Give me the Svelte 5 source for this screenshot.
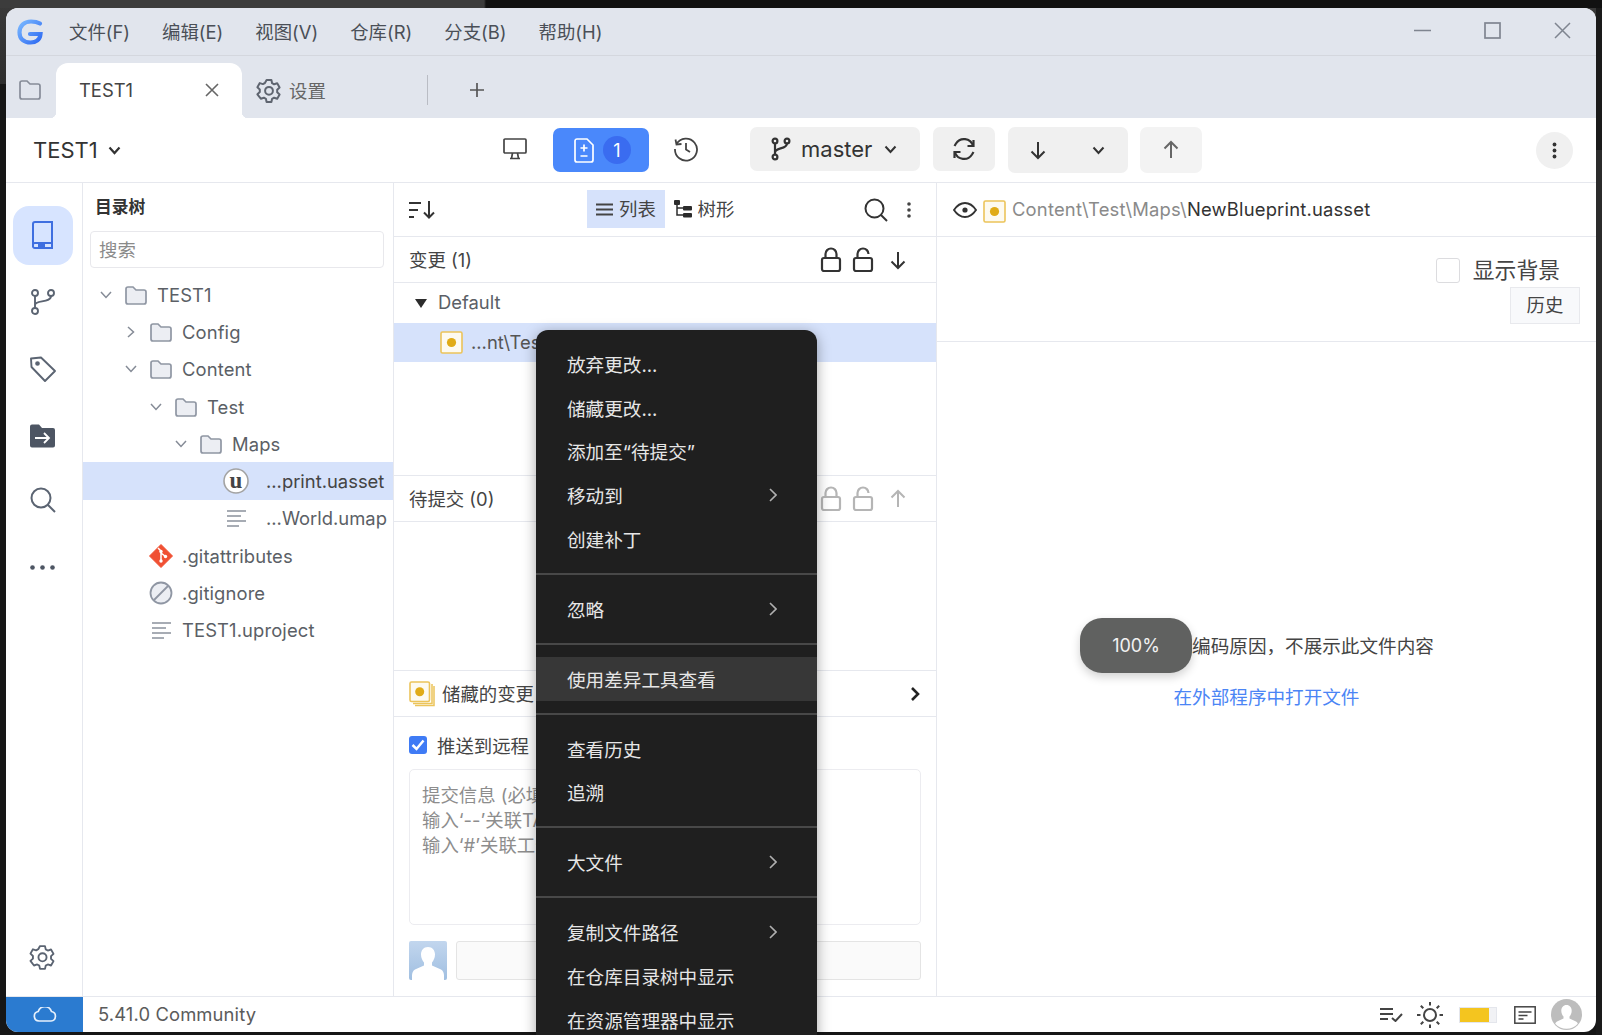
<script>
  const menu1 = ['文件(F)', '编辑(E)', '视图(V)', '仓库(R)', '分支(B)', '帮助(H)'];
  const tree = [
    { d: 0, c: 'down', i: 'folder', t: 'TEST1' },
    { d: 1, c: 'right', i: 'folder', t: 'Config' },
    { d: 1, c: 'down', i: 'folder', t: 'Content' },
    { d: 2, c: 'down', i: 'folder', t: 'Test' },
    { d: 3, c: 'down', i: 'folder', t: 'Maps' },
    { d: 4, i: 'ue', t: '...print.uasset', sel: true, far: true },
    { d: 4, i: 'lines', t: '...World.umap', far: true },
    { d: 1, i: 'git', t: '.gitattributes' },
    { d: 1, i: 'ban', t: '.gitignore' },
    { d: 1, i: 'lines', t: 'TEST1.uproject' }
  ];
  const ctx = [
    [{ t: '放弃更改...' }, { t: '储藏更改...' }, { t: '添加至“待提交”' }, { t: '移动到', sub: true }, { t: '创建补丁' }],
    [{ t: '忽略', sub: true }],
    [{ t: '使用差异工具查看', hot: true }],
    [{ t: '查看历史' }, { t: '追溯' }],
    [{ t: '大文件', sub: true }],
    [{ t: '复制文件路径', sub: true }, { t: '在仓库目录树中显示' }, { t: '在资源管理器中显示' }]
  ];
</script>

{#snippet folderIcon()}
  <svg width="24" height="22" viewBox="0 0 24 22"><path d="M2 5a2 2 0 0 1 2-2h5l3 3h8a2 2 0 0 1 2 2v10a2 2 0 0 1-2 2H4a2 2 0 0 1-2-2z" fill="#eceef3" stroke="#8f96a3" stroke-width="1.7"/></svg>
{/snippet}
{#snippet linesIcon()}
  <svg width="24" height="22" viewBox="0 0 24 22" fill="none" stroke="#8b919c" stroke-width="1.6"><path d="M3 4h19M3 9h14M3 14h19M3 19h12"/></svg>
{/snippet}
{#snippet modIcon()}
  <svg width="23" height="23" viewBox="0 0 23 23"><rect x="1" y="1" width="21" height="21" rx="1.5" fill="#fdfaf0" stroke="#ecc45a" stroke-width="1.6"/><circle cx="11.5" cy="11.5" r="4.6" fill="#e0ab17"/></svg>
{/snippet}
{#snippet lockIcon(color)}
  <svg width="22" height="26" viewBox="0 0 22 26" fill="none" stroke={color} stroke-width="2.2"><rect x="2" y="11" width="18" height="13" rx="2"/><path d="M5.5 11V7a5.5 5.5 0 0 1 11 0v4"/></svg>
{/snippet}
{#snippet unlockIcon(color)}
  <svg width="22" height="26" viewBox="0 0 22 26" fill="none" stroke={color} stroke-width="2.2"><rect x="2" y="11" width="18" height="13" rx="2"/><path d="M5.5 11V7a5.5 5.5 0 0 1 11 0"/></svg>
{/snippet}
{#snippet arrow(color, up)}
  <svg width="18" height="20" viewBox="0 0 18 20" fill="none" stroke={color} stroke-width="2"><g transform={up ? 'rotate(180 9 10)' : ''}><path d="M9 2v16M2.5 11.5 9 18l6.5-6.5"/></g></svg>
{/snippet}
{#snippet chevD(color, w = 2)}
  <svg width="13" height="9" viewBox="0 0 13 9" fill="none" stroke={color} stroke-width={w}><path d="M1.5 1.5 6.5 7l5-5.5"/></svg>
{/snippet}
{#snippet gearIcon(size, color, w = 1.8)}
  <svg width={size} height={size} viewBox="0 0 26 26" fill="none" stroke={color} stroke-width={w}><path d="M10.6 2h4.8l.7 3.2 2 1.1 3.1-1 2.4 4.2-2.4 2.2v2.6l2.4 2.2-2.4 4.2-3.1-1-2 1.1-.7 3.2h-4.8l-.7-3.2-2-1.1-3.1 1L1.4 16.3l2.4-2.2v-2.6L1.4 9.3l2.4-4.2 3.1 1 2-1.1z" stroke-linejoin="round"/><circle cx="13" cy="12.8" r="3.9"/></svg>
{/snippet}

<div class="stage">
  <div class="win">
    <header class="titlebar">
      <svg class="logo" width="26" height="26" viewBox="0 0 26 26" fill="none"><defs><linearGradient id="lg" x1="0" y1="0" x2="1" y2="1"><stop offset="0" stop-color="#7ab8ff"/><stop offset="1" stop-color="#2f6bf2"/></linearGradient></defs><path d="M23 4.500C20 2.800 17 2.500 14 2.500 7 2.500 2.500 7 2.500 13.500S7 23.500 13.500 23.500c5.500 0 9.500-3 10-8.500H13" stroke="url(#lg)" stroke-width="4.200" stroke-linecap="round"/></svg>
      <nav class="menubar">
        {#each menu1 as m}<span>{m}</span>{/each}
      </nav>
      <div class="winctl">
        <svg width="17" height="17" viewBox="0 0 17 17" stroke="#7f8590" stroke-width="1.700"><path d="M0 8.500h17"/></svg>
        <svg width="17" height="17" viewBox="0 0 17 17" fill="none" stroke="#7f8590" stroke-width="1.700"><rect x="1" y="1" width="15" height="15"/></svg>
        <svg width="17" height="17" viewBox="0 0 17 17" stroke="#7f8590" stroke-width="1.500"><path d="M1 1l15 15M16 1 1 16"/></svg>
      </div>
    </header>

    <div class="tabbar">
      <span class="tabfolder"><svg width="24" height="22" viewBox="0 0 24 22" fill="none" stroke="#868c98" stroke-width="1.700"><path d="M2 4a2 2 0 0 1 2-2h5l3 3h8a2 2 0 0 1 2 2v11a2 2 0 0 1-2 2H4a2 2 0 0 1-2-2z"/></svg></span>
      <div class="tab active">
        <span class="tabtext">TEST1</span>
        <svg class="tabx" width="14" height="14" viewBox="0 0 14 14" stroke="#666" stroke-width="1.600"><path d="M1 1l12 12M13 1 1 13"/></svg>
      </div>
      <div class="tab plain">
        {@render gearIcon(26, '#5f6570', 2)}
        <span class="tabtext">设置</span>
      </div>
      <span class="tabsep"></span>
      <svg class="plus" width="14" height="14" viewBox="0 0 14 14" stroke="#555" stroke-width="1.700"><path d="M7 0v14M0 7h14"/></svg>
    </div>

    <div class="toolbar">
      <div class="repo">TEST1 {@render chevD('#333', 2.200)}</div>
      <svg class="monitor" width="24" height="22" viewBox="0 0 24 22" fill="none" stroke="#444" stroke-width="1.700"><rect x="1" y="1" width="22" height="14" rx="1"/><path d="M9.500 15l-1 5.500h7l-1-5.500M7 20.500h10"/></svg>
      <button class="changes-btn">
        <svg width="22" height="25" viewBox="0 0 22 25" fill="none" stroke="#fff" stroke-width="1.700"><path d="M2 3a2 2 0 0 1 2-2h10l6 6v15a2 2 0 0 1-2 2H4a2 2 0 0 1-2-2z"/><path d="M11 6.500v7M7.500 10h7M7.500 18h7"/></svg>
        <span class="badge">1</span>
      </button>
      <svg class="hist" width="26" height="26" viewBox="0 0 26 26" fill="none" stroke="#444" stroke-width="1.800"><path d="M3.500 8A11 11 0 1 1 2 13"/><path d="M2.500 3.500 3.500 8.500 8.500 8"/><path d="M13 7v6.500l4 2.500"/></svg>
      <button class="tbtn master">
        <svg width="20" height="24" viewBox="0 0 20 24" fill="none" stroke="#333" stroke-width="2.200"><circle cx="4" cy="4" r="2.400"/><circle cx="16" cy="4" r="2.400"/><circle cx="4" cy="20" r="2.400"/><path d="M4 6.400v11.200M16 6.400c0 6-12 4-12 9"/></svg>
        <span>master</span>
        {@render chevD('#333')}
      </button>
      <button class="tbtn sync">
        <svg width="24" height="24" viewBox="0 0 24 24" fill="none" stroke="#333" stroke-width="2.200"><path d="M21 8.500A9.500 9.500 0 0 0 4 6.500L2.500 9M3 15.500A9.500 9.500 0 0 0 20 17.500l1.500-2.500"/><path d="M21.500 3v6h-6M2.500 21v-6h6"/></svg>
      </button>
      <button class="tbtn pull">
        {@render arrow('#333', false)}
        {@render chevD('#333')}
      </button>
      <button class="tbtn push">{@render arrow('#666', true)}</button>
      <button class="more"><svg width="5" height="17" viewBox="0 0 5 17" fill="#333"><circle cx="2.500" cy="2.500" r="1.900"/><circle cx="2.500" cy="8.500" r="1.900"/><circle cx="2.500" cy="14.500" r="1.900"/></svg></button>
    </div>

    <div class="main">
      <aside class="side">
        <div class="side-active">
          <svg width="23" height="29" viewBox="0 0 23 29" fill="none" stroke="#3f6fe0" stroke-width="2"><path d="M2 24V3a2 2 0 0 1 2-2h17v26H4a2 2 0 0 1-2-2.500 2 2 0 0 1 2-2.500h17"/><path d="M7 22h7v6l-3.500-2L7 28z" fill="#3f6fe0" stroke="none"/></svg>
        </div>
        <div class="side-item first"><svg width="26" height="28" viewBox="0 0 26 28" fill="none" stroke="#5b6472" stroke-width="1.900"><circle cx="5" cy="5" r="3"/><circle cx="21" cy="5" r="3"/><circle cx="5" cy="23" r="3"/><path d="M5 8v12M21 8c0 7-16 4-16 9"/></svg></div>
        <div class="side-item"><svg width="28" height="28" viewBox="0 0 28 28" fill="none" stroke="#5b6472" stroke-width="1.900"><path d="M2 3.500 2.500 12 16 26l10-10L12 2.500z" stroke-linejoin="round"/><circle cx="8.500" cy="8.500" r="1.400" fill="#5b6472"/></svg></div>
        <div class="side-item"><svg width="25" height="24" viewBox="0 0 25 24"><path d="M0 2.500A2 2 0 0 1 2 .5h7l3 3.500h11a2 2 0 0 1 2 2v15.500a2 2 0 0 1-2 2H2a2 2 0 0 1-2-2z" fill="#4d5563"/><path d="M5 14h14M14 9l5 5-5 5" stroke="#fff" stroke-width="1.800" fill="none"/></svg></div>
        <div class="side-item s"><svg width="26" height="26" viewBox="0 0 26 26" fill="none" stroke="#5b6472" stroke-width="2"><circle cx="11" cy="11" r="9.500"/><path d="M18 18l7 7"/></svg></div>
        <div class="side-item d"><svg width="25" height="5" viewBox="0 0 25 5" fill="#4d5563"><circle cx="2.500" cy="2.500" r="2.300"/><circle cx="12.500" cy="2.500" r="2.300"/><circle cx="22.500" cy="2.500" r="2.300"/></svg></div>
        <div class="side-gear">{@render gearIcon(27, '#5b6472')}</div>
      </aside>

      <section class="treepane">
        <h2>目录树</h2>
        <input class="search" placeholder="搜索" />
        <div class="tree">
          {#each tree as r}
            <div class="row" class:sel={r.sel} style="padding-left:{13 + 25 * r.d}px">
              <span class="chev">
                {#if r.c === 'down'}
                  <svg width="12" height="8" viewBox="0 0 12 8" fill="none" stroke="#858b96" stroke-width="1.500"><path d="M1 1l5 5.500L11 1"/></svg>
                {:else if r.c === 'right'}
                  <svg width="8" height="12" viewBox="0 0 8 12" fill="none" stroke="#858b96" stroke-width="1.500"><path d="M1 1l5.500 5L1 11"/></svg>
                {/if}
              </span>
              <span class="ic">
                {#if r.i === 'folder'}
                  {@render folderIcon()}
                {:else if r.i === 'lines'}
                  {@render linesIcon()}
                {:else if r.i === 'ue'}
                  <svg width="26" height="26" viewBox="0 0 26 26"><circle cx="13" cy="13" r="12" fill="#fff" stroke="#a3a3a3" stroke-width="1.600"/><text x="13" y="19.500" text-anchor="middle" font-family="Liberation Serif" font-weight="700" font-size="23" fill="#444">u</text></svg>
                {:else if r.i === 'git'}
                  <svg width="24" height="24" viewBox="0 0 24 24"><path d="M12 .5 23.500 12 12 23.500.5 12z" fill="#f05033" stroke="#f05033" stroke-width="1" stroke-linejoin="round"/><path d="M9 4l3 3M12 7v10M12 9l4.500 3.500" stroke="#fff" stroke-width="1.500" fill="none"/><circle cx="12" cy="7.500" r="1.700" fill="#fff"/><circle cx="12" cy="17" r="1.700" fill="#fff"/><circle cx="16.500" cy="12.500" r="1.700" fill="#fff"/></svg>
                {:else if r.i === 'ban'}
                  <svg width="24" height="24" viewBox="0 0 24 24" fill="#eceef3" stroke="#8f96a3" stroke-width="1.800"><circle cx="12" cy="12" r="10.500"/><path d="M5 19 19 5" fill="none"/></svg>
                {/if}
              </span>
              <span class="lbl" class:far={r.far}>{r.t}</span>
            </div>
          {/each}
        </div>
      </section>

      <section class="center">
        <div class="c-head">
          <svg class="sort" width="26" height="18" viewBox="0 0 26 18" fill="none" stroke="#333" stroke-width="2"><path d="M0 2h12M0 9h9M0 16h5"/><path d="M20 0v16M15 11.500l5 5 5-5"/></svg>
          <div class="seg on">
            <svg width="17" height="13" viewBox="0 0 17 13" stroke="#444" stroke-width="1.800"><path d="M0 1.500h17M0 6.500h17M0 11.500h17"/></svg>
            <span>列表</span>
          </div>
          <div class="seg">
            <svg width="18" height="18" viewBox="0 0 18 18" fill="#2c2c2c"><rect x="0" y="0" width="6" height="5" rx="1"/><rect x="9" y="6" width="9" height="4.500" rx="1"/><rect x="9" y="13" width="9" height="4.500" rx="1"/><path d="M3 5v10h6M3 8h6" fill="none" stroke="#2c2c2c" stroke-width="1.500"/></svg>
            <span>树形</span>
          </div>
          <svg class="c-search" width="24" height="24" viewBox="0 0 24 24" fill="none" stroke="#333" stroke-width="2"><circle cx="10.500" cy="10.500" r="9"/><path d="M17 17l6 6"/></svg>
          <svg class="c-more" width="4" height="16" viewBox="0 0 4 16" fill="#444"><circle cx="2" cy="2" r="1.800"/><circle cx="2" cy="8" r="1.800"/><circle cx="2" cy="14" r="1.800"/></svg>
        </div>
        <div class="c-row h46">
          <span class="c-title">变更 (1)</span>
          <span class="acts">
            {@render lockIcon('#333')}
            {@render unlockIcon('#333')}
            {@render arrow('#333', false)}
          </span>
        </div>
        <div class="list changes">
          <div class="group"><svg width="12" height="9" viewBox="0 0 12 9" fill="#2c2c2c"><path d="M0 0h12L6 9z"/></svg><span class="c-title">Default</span></div>
          <div class="fileitem">{@render modIcon()}<span class="c-title">...nt\Test\Maps\NewBlueprint.uasset</span></div>
        </div>
        <div class="c-row h46">
          <span class="c-title">待提交 (0)</span>
          <span class="acts">
            {@render lockIcon('#b5b5b5')}
            {@render unlockIcon('#b5b5b5')}
            {@render arrow('#b5b5b5', true)}
          </span>
        </div>
        <div class="list pending"></div>
        <div class="c-row h46 stash">
          <span class="stash-l">
            <svg width="26" height="26" viewBox="0 0 26 26" fill="none"><path d="M6 24.500h19V5" stroke="#ecc45a" stroke-width="1.500"/><path d="M4 22.500h19V3" stroke="#ecc45a" stroke-width="1.500"/><rect x="1" y="1" width="19.500" height="19.500" rx="1.500" fill="#fdfaf0" stroke="#ecc45a" stroke-width="1.600"/><circle cx="10.700" cy="10.700" r="4.500" fill="#e0ab17"/></svg>
            <span class="c-title">储藏的变更</span>
          </span>
          <svg width="11" height="16" viewBox="0 0 11 16" fill="none" stroke="#222" stroke-width="2.600"><path d="M2 2l6 6-6 6"/></svg>
        </div>
        <div class="commit">
          <label class="push-l">
            <span class="cb"><svg width="14" height="12" viewBox="0 0 14 12" fill="none" stroke="#fff" stroke-width="2.500"><path d="M1.500 6l4 4 7-8.500"/></svg></span>
            <span>推送到远程</span>
          </label>
          <div class="msg">提交信息 (必填)<br />输入‘--’关联TAPD<br />输入‘#’关联工作项</div>
          <div class="who">
            <svg class="avatar" width="38" height="39" viewBox="0 0 38 39"><defs><linearGradient id="av" x1="0" y1="0" x2="0" y2="1"><stop offset="0" stop-color="#c2d6ee"/><stop offset="1" stop-color="#a0bfe1"/></linearGradient></defs><rect width="38" height="39" rx="2" fill="url(#av)"/><path d="M19 6c4.500 0 7 3.500 7 7.500 0 3.500-1.500 6-3 8v3l9 4c2 1 3 3.500 3 6V39H3v-4.500c0-2.500 1-5 3-6l9-4v-3c-1.500-2-3-4.500-3-8C12 9.500 14.500 6 19 6z" fill="#fff"/></svg>
            <div class="who-input"></div>
          </div>
        </div>
      </section>

      <section class="right">
        <div class="r-head">
          <svg width="24" height="16" viewBox="0 0 24 16" fill="none" stroke="#333" stroke-width="1.900"><path d="M1 8c3-4.500 6.500-7 11-7s8 2.500 11 7c-3 4.500-6.500 7-11 7S4 12.500 1 8z"/><circle cx="12" cy="8" r="2.600" fill="#333" stroke="none"/></svg>
          <span class="r-file">{@render modIcon()}</span>
          <span class="path"><span class="dim">Content\Test\Maps\</span>NewBlueprint.uasset</span>
        </div>
        <div class="r-opts">
          <label class="bg-l"><span class="cb2"></span><span class="bgtext">显示背景</span></label>
          <button class="hbtn">历史</button>
        </div>
        <div class="r-body">
          <p>文件过大或编码原因，不展示此文件内容</p>
          <a href="#open">在外部程序中打开文件</a>
        </div>
      </section>
    </div>

    <footer class="status">
      <div class="cloud"><svg width="24" height="15" viewBox="0 0 24 15" fill="none" stroke="#e6f0fb" stroke-width="1.700"><path d="M6 14a4.800 4.800 0 0 1-.8-9.500 7 7 0 0 1 13.300 0A4.800 4.800 0 0 1 18 14z"/></svg></div>
      <span class="ver">5.41.0 Community</span>
      <div class="st-right">
        <svg width="23" height="15" viewBox="0 0 23 15" fill="none" stroke="#444" stroke-width="2"><path d="M0 2h13M0 7h13M0 12h8"/><path d="M12 11l3.500 3L22 7"/></svg>
        <svg class="sun" width="26" height="26" viewBox="0 0 26 26" fill="none" stroke="#444" stroke-width="2"><circle cx="13" cy="13" r="6"/><path d="M13 0v3.500M13 22.500V26M0 13h3.500M22.500 13H26M3.800 3.800l2.500 2.500M19.700 19.700l2.500 2.500M22.200 3.800l-2.500 2.500M6.300 19.700l-2.500 2.500"/></svg>
        <span class="battery"><span class="fill" style="width:81%"></span></span>
        <svg class="notes" width="22" height="18" viewBox="0 0 22 18" fill="none" stroke="#444"><rect x=".8" y=".8" width="20.400" height="16.400" stroke-width="1.500"/><path d="M4.500 6h13M4.500 9.500h9M4.500 13h5" stroke-width="1.500"/></svg>
        <svg width="31" height="31" viewBox="0 0 31 31"><circle cx="15.500" cy="15.500" r="15.500" fill="#bdbdbd"/><path d="M15.500 6c3.200 0 5.200 2.500 5.200 5.700 0 2.500-1 4.400-2.200 5.800v2l6.500 3c1 .6 1.500 1.300 1.800 2.200a15 15 0 0 1-22.600 0c.3-.9.800-1.600 1.800-2.200l6.500-3v-2c-1.200-1.400-2.200-3.300-2.200-5.800C10.300 8.500 12.300 6 15.500 6z" fill="#fff"/></svg>
      </div>
    </footer>
  </div>

  <div class="ctx">
    {#each ctx as grp}
      <div class="ctx-group">
        {#each grp as it}
          <div class="ctx-item" class:hot={it.hot}>
            <span class="ctx-t">{it.t}</span>
            {#if it.sub}
              <svg width="8" height="14" viewBox="0 0 8 14" fill="none" stroke="#b0b0b0" stroke-width="1.600"><path d="M1 1l6 6-6 6"/></svg>
            {/if}
          </div>
        {/each}
      </div>
    {/each}
  </div>

  <div class="zoomtip">100%</div>
</div>

<style>
  :global(body) { margin: 0; background: #141414; }
  .stage {
    position: relative; width: 1602px; height: 1035px; overflow: hidden;
    background:
      linear-gradient(90deg, #3c3c3c 0, #3c3c3c 484px, #111 486px, #111 100%) top / 100% 8px no-repeat,
      linear-gradient(180deg, #1a1a1a 0, #1a1a1a 150px, #2b2b2b 150px, #2b2b2b 520px, #1a1a1a 520px) right / 6px 100% no-repeat,
      linear-gradient(#3a3a3a 0, #2e2e2e 84px, #161616 84px);
    font-family: Inter, "Noto Sans CJK SC", sans-serif; font-size: 18.400px; color: #444;
  }
  .win {
    width: 1590px; height: 1024px; margin: 0; position: absolute; left: 6px; top: 8px;
    display: flex; flex-direction: column; background: #fff; border-radius: 12px; overflow: hidden;
  }
  button { font: inherit; color: inherit; border: 0; padding: 0; background: none; }
  svg { flex: none; display: block; }

  .titlebar { height: 47px; flex: none; border-bottom: 1px solid #d4d7de; background: #e1e5ed; display: flex; align-items: center; padding-left: 11px; }
  .menubar { display: flex; gap: 32px; margin-left: 26px; color: #4a4f57; padding-bottom: 2px; }
  .winctl { margin-left: auto; display: flex; gap: 53px; padding-right: 25px; margin-top: -2px; }

  .tabbar { height: 62px; flex: none; background: #e1e5ed; display: flex; align-items: flex-end; }
  .tabfolder { width: 50px; height: 55px; display: flex; align-items: center; justify-content: center; padding-right: 2px; padding-bottom: 2px; box-sizing: border-box; }
  .tab { height: 55px; display: flex; align-items: center; }
  .tabtext { padding-bottom: 2px; }
  .tab.active { position: relative; width: 186px; background: #fff; border-radius: 12px 12px 0 0; padding: 0 23px; box-sizing: border-box; justify-content: space-between; color: #444; margin-top: 7px; }
  .tab.active::before, .tab.active::after { content: ""; position: absolute; bottom: 0; width: 6px; height: 6px; }
  .tab.active::before { left: -6px; background: radial-gradient(circle at 0 0, #e1e5ed 6px, #fff 6.500px); }
  .tab.active::after { right: -6px; background: radial-gradient(circle at 100% 0, #e1e5ed 6px, #fff 6.500px); }
  .tabx { margin-top: -2px; }
  .tab.plain { padding-left: 14px; gap: 7px; color: #666; width: 171px; box-sizing: border-box; padding-right: 0; }
  .tabsep { width: 1px; height: 30px; background: #b9bcc4; margin-bottom: 13px; margin-left: 14px; }
  .plus { margin: 0 0 21px 42px; }

  .toolbar { height: 64px; flex: none; border-bottom: 1px solid #e6e8ee; display: flex; align-items: center; padding-left: 27px; position: relative; }
  .repo { font-size: 22px; color: #333; display: flex; align-items: center; gap: 10px; width: 470px; }
  .monitor { margin-right: 26px; margin-top: -3px; }
  .changes-btn { width: 96px; height: 44px; background: #4a88fb; border-radius: 7px; display: flex; align-items: center; padding-left: 20px; gap: 8px; box-sizing: border-box; color: #fff; }
  .badge { width: 28px; height: 28px; border-radius: 50%; background: #3a6cf0; display: flex; align-items: center; justify-content: center; font-size: 18px; }
  .hist { margin-left: 24px; margin-right: 51px; margin-top: -2px; }
  .tbtn { height: 44px; background: #f0f0f0; border-radius: 7px; display: flex; align-items: center; justify-content: center; box-sizing: border-box; }
  .master { width: 170px; font-size: 22px; color: #333; margin-top: -2px; justify-content: flex-start; padding-left: 21px; gap: 10px; }
  .master svg:last-child { margin-left: 2px; }
  .sync { width: 62px; margin-left: 13px; margin-top: -2px; }
  .pull { width: 120px; margin-left: 13px; justify-content: flex-start; padding-left: 21px; gap: 44.500px; height: 46px; }
  .push { width: 62px; margin-left: 12px; background: #f3f3f3; height: 46px; }
  .more { width: 37px; height: 37px; border-radius: 50%; background: #f0f0f0; display: flex; align-items: center; justify-content: center; margin-left: auto; margin-right: 23px; }

  .main { flex: 1; min-height: 0; display: grid; grid-template-columns: 77px 311px 543px 1fr; }

  .side { border-right: 1px solid #e6e8ee; display: flex; flex-direction: column; align-items: center; box-sizing: border-box; padding: 23px 3px 0 0; }
  .side-active { width: 60px; height: 59px; border-radius: 16px; background: #d7e4ff; display: flex; align-items: center; justify-content: center; }
  .side-item { height: 67px; display: flex; align-items: center; justify-content: center; width: 100%; }
  .side-item.first { margin-top: 3px; }
  .side-item.s { height: 62px; }
  .side-item.d { height: 72px; }
  .side-gear { margin-top: auto; height: 40px; display: flex; align-items: center; margin-bottom: 19px; }

  .treepane { border-right: 1px solid #e6e8ee; min-width: 0; display: flex; flex-direction: column; }
  h2 { margin: 13px 0 13px 12px; font-size: 16.800px; line-height: 22px; font-weight: 700; color: #333; }
  .search { margin-left: 7px; width: 294px; height: 37px; box-sizing: border-box; border: 1px solid #e8e8ec; border-radius: 4px; padding: 0 8px; font: inherit; outline: none; }
  .search::placeholder { color: #8a8a8a; }
  .tree { margin-top: 8px; }
  .row { height: 37.300px; display: flex; align-items: center; box-sizing: border-box; color: #5b5f66; white-space: nowrap; letter-spacing: .12px; }
  .row.sel { background: #d6e2fb; color: #444; }
  .chev { width: 16px; margin: 0 10px 0 2px; display: flex; justify-content: center; flex: none; }
  .ic { width: 24px; flex: none; margin-right: 9px; display: flex; justify-content: center; }
  .lbl.far { margin-left: 9px; letter-spacing: 0; }

  .center { border-right: 1px solid #e6e8ee; display: flex; flex-direction: column; min-width: 0; }
  .c-head { height: 53px; flex: none; border-bottom: 1px solid #e6e8ee; display: flex; align-items: center; position: relative; padding-left: 15px; }
  .sort { margin-right: 152px; }
  .seg { height: 38px; width: 78px; display: flex; align-items: center; justify-content: center; gap: 6px; color: #444; font-size: 18.400px; margin-top: -1px; }
  .seg span { padding-bottom: 2px; }
  .seg.on { background: #d6e2fb; }
  .c-search { margin-left: auto; margin-right: 19px; }
  .c-more { margin-right: 25px; }
  .c-row { flex: none; display: flex; align-items: center; justify-content: space-between; padding: 0 29px 0 15px; box-sizing: border-box; border-bottom: 1px solid #e6e8ee; }
  .h46 { height: 46px; }
  .c-title { color: #444; padding-bottom: 2px; }
  .acts { display: flex; align-items: center; gap: 10px; }
  .acts svg:last-child { margin-left: 5px; }
  .list { flex: none; box-sizing: border-box; border-bottom: 1px solid #e6e8ee; }
  .changes { height: 193px; }
  .pending { height: 149px; }
  .group { height: 40px; display: flex; align-items: center; padding-left: 21px; gap: 11px; }
  .group .c-title { color: #5b5f66; }
  .fileitem { height: 39px; background: #d6e2fb; display: flex; align-items: center; padding-left: 46px; gap: 8px; white-space: nowrap; overflow: hidden; }
  .fileitem .c-title { color: #555; }
  .stash-l { display: flex; align-items: center; gap: 7px; color: #444; }
  .stash { padding-right: 15px; }
  .commit { padding: 0 15px 0 15px; flex: 1; display: flex; flex-direction: column; }
  .push-l { display: flex; align-items: center; gap: 10px; height: 52px; padding-top: 4px; box-sizing: border-box; color: #444; flex: none; }
  .cb { width: 18px; height: 18px; border-radius: 3px; background: #3f7bf5; display: flex; align-items: center; justify-content: center; }
  .msg { height: 156px; box-sizing: border-box; border: 1px solid #ececf0; border-radius: 5px; padding: 12.500px 12px; line-height: 25px; color: #8d8d8d; flex: none; white-space: nowrap; overflow: hidden; }
  .who { display: flex; gap: 9px; margin-top: 16px; }
  .who-input { flex: 1; height: 39px; box-sizing: border-box; background: #fafafa; border: 1.500px solid #e4e4e4; border-radius: 3px; }

  .right { min-width: 0; display: flex; flex-direction: column; }
  .r-head { height: 53px; flex: none; border-bottom: 1px solid #e6e8ee; display: flex; align-items: center; padding-left: 16px; gap: 6px; }
  .r-file { margin-top: 4px; }
  .path { color: #333; margin: 0 0 2px 0; letter-spacing: .19px; }
  .dim { color: #8a8a8a; }
  .r-opts { height: 105px; flex: none; box-sizing: border-box; border-bottom: 1px solid #e6e8ee; display: flex; flex-direction: column; align-items: flex-end; padding: 20px 16px 0 0; }
  .bg-l { display: flex; align-items: center; gap: 13px; font-size: 21.800px; color: #444; height: 27px; margin-right: 20px; margin-bottom: 3px; }
  .bgtext { padding-bottom: 4px; }
  .cb2 { width: 24px; height: 25px; border: 1.500px solid #dcdcdf; border-radius: 3px; box-sizing: border-box; background: #fff; }
  .hbtn { width: 70px; height: 37px; box-sizing: border-box; background: #f8f9fb; border: 1px solid #e8e9ed; color: #444; padding-bottom: 4px; }
  .r-body { flex: 1; display: flex; flex-direction: column; align-items: center; justify-content: center; gap: 26px; padding-top: 6px; line-height: 25px; font-size: 18.600px; color: #444; }
  .r-body p { margin: 0; }
  .r-body a { color: #4b85f5; text-decoration: none; }

  .status { height: 36px; flex: none; box-sizing: border-box; border-top: 1px solid #e6e8ee; display: flex; align-items: center; }
  .cloud { width: 77px; height: 35px; background: #2b7bd0; display: flex; align-items: center; justify-content: center; }
  .ver { margin-left: 15px; color: #5b5b5b; letter-spacing: .12px; padding-bottom: 2px; }
  .st-right { margin-left: auto; display: flex; align-items: center; padding-right: 14px; }
  .sun { margin-left: 14px; }
  .battery { width: 38px; height: 16px; background: #f1f2f5; display: block; margin-left: 16px; box-sizing: border-box; border: 1px solid #e4e6ec; }
  .fill { display: block; height: 100%; background: #f4c51f; }
  .notes { margin-left: 17px; margin-right: 15px; }

  .ctx {
    position: absolute; left: 536px; top: 330px; width: 281px; background: #1f1f1f; color: #e6e6e6;
    border-radius: 12px 12px 0 0; box-shadow: 0 3px 14px rgba(0, 0, 0, .35); font-size: 18.600px;
  }
  .ctx-group { padding: 12.150px 0; border-bottom: 2px solid #484848; }
  .ctx-group:last-child { border-bottom: 0; }
  .ctx-item { height: 43.700px; display: flex; align-items: center; justify-content: space-between; padding: 0 40px 0 31px; }
  .ctx-t { padding-bottom: 1px; }
  .ctx-item.hot { background: #373737; }

  .zoomtip {
    position: absolute; left: 1080px; top: 618px; width: 112px; height: 55px; border-radius: 22px; background: #606160;
    color: #f2f2f2; display: flex; align-items: center; justify-content: center; font-size: 18px; box-shadow: 0 4px 10px rgba(0, 0, 0, .18);
  }
</style>
